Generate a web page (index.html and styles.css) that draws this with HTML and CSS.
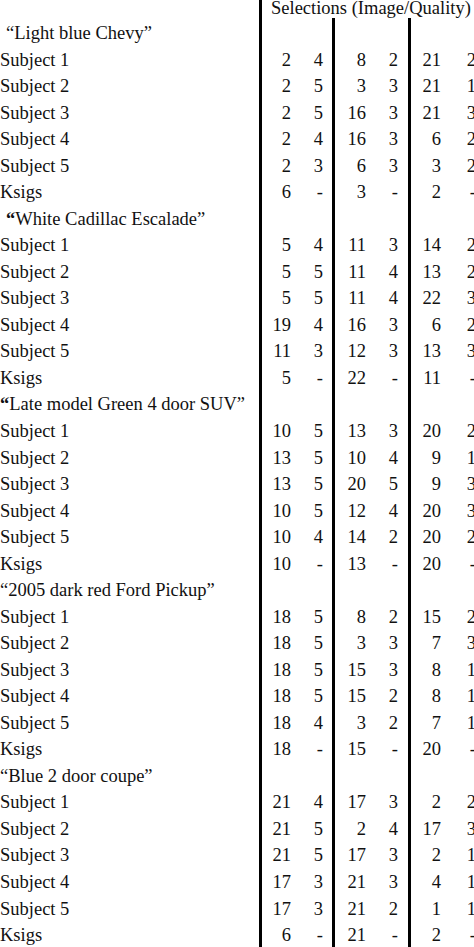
FILE: index.html
```html
<!DOCTYPE html>
<html lang="en">
<head>
<meta charset="utf-8">
<title>Selections table</title>
<link rel="stylesheet" href="styles.css">
</head>
<body>
<div class="table">
  <div class="head"><div class="lbl"></div><div class="span">Selections (Image/Quality)</div></div>

  <div class="row"><div class="lbl ind">“Light blue Chevy”</div><div class="grp g1"></div><div class="grp g2"></div><div class="grp g3"></div></div>
  <div class="row"><div class="lbl">Subject 1</div><div class="grp g1"><span>2</span><span>4</span></div><div class="grp g2"><span>8</span><span>2</span></div><div class="grp g3"><span>21</span><span>2</span></div></div>
  <div class="row"><div class="lbl">Subject 2</div><div class="grp g1"><span>2</span><span>5</span></div><div class="grp g2"><span>3</span><span>3</span></div><div class="grp g3"><span>21</span><span>1</span></div></div>
  <div class="row"><div class="lbl">Subject 3</div><div class="grp g1"><span>2</span><span>5</span></div><div class="grp g2"><span>16</span><span>3</span></div><div class="grp g3"><span>21</span><span>3</span></div></div>
  <div class="row"><div class="lbl">Subject 4</div><div class="grp g1"><span>2</span><span>4</span></div><div class="grp g2"><span>16</span><span>3</span></div><div class="grp g3"><span>6</span><span>2</span></div></div>
  <div class="row"><div class="lbl">Subject 5</div><div class="grp g1"><span>2</span><span>3</span></div><div class="grp g2"><span>6</span><span>3</span></div><div class="grp g3"><span>3</span><span>2</span></div></div>
  <div class="row"><div class="lbl">Ksigs</div><div class="grp g1"><span>6</span><span>-</span></div><div class="grp g2"><span>3</span><span>-</span></div><div class="grp g3"><span>2</span><span>-</span></div></div>

  <div class="row"><div class="lbl ind"><b>“</b>White Cadillac Escalade”</div><div class="grp g1"></div><div class="grp g2"></div><div class="grp g3"></div></div>
  <div class="row"><div class="lbl">Subject 1</div><div class="grp g1"><span>5</span><span>4</span></div><div class="grp g2"><span>11</span><span>3</span></div><div class="grp g3"><span>14</span><span>2</span></div></div>
  <div class="row"><div class="lbl">Subject 2</div><div class="grp g1"><span>5</span><span>5</span></div><div class="grp g2"><span>11</span><span>4</span></div><div class="grp g3"><span>13</span><span>2</span></div></div>
  <div class="row"><div class="lbl">Subject 3</div><div class="grp g1"><span>5</span><span>5</span></div><div class="grp g2"><span>11</span><span>4</span></div><div class="grp g3"><span>22</span><span>3</span></div></div>
  <div class="row"><div class="lbl">Subject 4</div><div class="grp g1"><span>19</span><span>4</span></div><div class="grp g2"><span>16</span><span>3</span></div><div class="grp g3"><span>6</span><span>2</span></div></div>
  <div class="row"><div class="lbl">Subject 5</div><div class="grp g1"><span>11</span><span>3</span></div><div class="grp g2"><span>12</span><span>3</span></div><div class="grp g3"><span>13</span><span>3</span></div></div>
  <div class="row"><div class="lbl">Ksigs</div><div class="grp g1"><span>5</span><span>-</span></div><div class="grp g2"><span>22</span><span>-</span></div><div class="grp g3"><span>11</span><span>-</span></div></div>

  <div class="row"><div class="lbl"><b>“</b>Late model Green 4 door SUV”</div><div class="grp g1"></div><div class="grp g2"></div><div class="grp g3"></div></div>
  <div class="row"><div class="lbl">Subject 1</div><div class="grp g1"><span>10</span><span>5</span></div><div class="grp g2"><span>13</span><span>3</span></div><div class="grp g3"><span>20</span><span>2</span></div></div>
  <div class="row"><div class="lbl">Subject 2</div><div class="grp g1"><span>13</span><span>5</span></div><div class="grp g2"><span>10</span><span>4</span></div><div class="grp g3"><span>9</span><span>1</span></div></div>
  <div class="row"><div class="lbl">Subject 3</div><div class="grp g1"><span>13</span><span>5</span></div><div class="grp g2"><span>20</span><span>5</span></div><div class="grp g3"><span>9</span><span>3</span></div></div>
  <div class="row"><div class="lbl">Subject 4</div><div class="grp g1"><span>10</span><span>5</span></div><div class="grp g2"><span>12</span><span>4</span></div><div class="grp g3"><span>20</span><span>3</span></div></div>
  <div class="row"><div class="lbl">Subject 5</div><div class="grp g1"><span>10</span><span>4</span></div><div class="grp g2"><span>14</span><span>2</span></div><div class="grp g3"><span>20</span><span>2</span></div></div>
  <div class="row"><div class="lbl">Ksigs</div><div class="grp g1"><span>10</span><span>-</span></div><div class="grp g2"><span>13</span><span>-</span></div><div class="grp g3"><span>20</span><span>-</span></div></div>

  <div class="row"><div class="lbl">“2005 dark red Ford Pickup”</div><div class="grp g1"></div><div class="grp g2"></div><div class="grp g3"></div></div>
  <div class="row"><div class="lbl">Subject 1</div><div class="grp g1"><span>18</span><span>5</span></div><div class="grp g2"><span>8</span><span>2</span></div><div class="grp g3"><span>15</span><span>2</span></div></div>
  <div class="row"><div class="lbl">Subject 2</div><div class="grp g1"><span>18</span><span>5</span></div><div class="grp g2"><span>3</span><span>3</span></div><div class="grp g3"><span>7</span><span>3</span></div></div>
  <div class="row"><div class="lbl">Subject 3</div><div class="grp g1"><span>18</span><span>5</span></div><div class="grp g2"><span>15</span><span>3</span></div><div class="grp g3"><span>8</span><span>1</span></div></div>
  <div class="row"><div class="lbl">Subject 4</div><div class="grp g1"><span>18</span><span>5</span></div><div class="grp g2"><span>15</span><span>2</span></div><div class="grp g3"><span>8</span><span>1</span></div></div>
  <div class="row"><div class="lbl">Subject 5</div><div class="grp g1"><span>18</span><span>4</span></div><div class="grp g2"><span>3</span><span>2</span></div><div class="grp g3"><span>7</span><span>1</span></div></div>
  <div class="row"><div class="lbl">Ksigs</div><div class="grp g1"><span>18</span><span>-</span></div><div class="grp g2"><span>15</span><span>-</span></div><div class="grp g3"><span>20</span><span>-</span></div></div>

  <div class="row"><div class="lbl">“Blue 2 door coupe”</div><div class="grp g1"></div><div class="grp g2"></div><div class="grp g3"></div></div>
  <div class="row"><div class="lbl">Subject 1</div><div class="grp g1"><span>21</span><span>4</span></div><div class="grp g2"><span>17</span><span>3</span></div><div class="grp g3"><span>2</span><span>2</span></div></div>
  <div class="row"><div class="lbl">Subject 2</div><div class="grp g1"><span>21</span><span>5</span></div><div class="grp g2"><span>2</span><span>4</span></div><div class="grp g3"><span>17</span><span>3</span></div></div>
  <div class="row"><div class="lbl">Subject 3</div><div class="grp g1"><span>21</span><span>5</span></div><div class="grp g2"><span>17</span><span>3</span></div><div class="grp g3"><span>2</span><span>1</span></div></div>
  <div class="row"><div class="lbl">Subject 4</div><div class="grp g1"><span>17</span><span>3</span></div><div class="grp g2"><span>21</span><span>3</span></div><div class="grp g3"><span>4</span><span>1</span></div></div>
  <div class="row"><div class="lbl">Subject 5</div><div class="grp g1"><span>17</span><span>3</span></div><div class="grp g2"><span>21</span><span>2</span></div><div class="grp g3"><span>1</span><span>1</span></div></div>
  <div class="row"><div class="lbl">Ksigs</div><div class="grp g1"><span>6</span><span>-</span></div><div class="grp g2"><span>21</span><span>-</span></div><div class="grp g3"><span>2</span><span>-</span></div></div>
</div>
</body>
</html>
```
FILE: styles.css
```css
html, body {
  margin: 0;
  padding: 0;
  background: #fff;
  overflow: hidden;
}

body {
  font-family: "Liberation Serif", "Times New Roman", serif;
  font-size: 18.5px;
  color: #111;
  width: 474px;
  height: 947px;
}

.table {
  display: flex;
  flex-direction: column;
  width: 520px;
}

.head {
  display: flex;
  height: 18px;
  line-height: 17px;
}

.head .lbl {
  width: 259px;
  flex: none;
  border-right: 3px solid #000;
}

.head .span {
  padding-left: 9px;
  white-space: nowrap;
}

.row {
  display: flex;
  box-sizing: border-box;
  height: 26.54px;
  line-height: 22.5px;
  padding-top: 4px;
}

.row .grp {
  margin-top: -4px;
  padding-top: 4px;
}

.lbl {
  width: 259px;
  flex: none;
  white-space: nowrap;
}

.lbl.ind {
  padding-left: 6px;
  box-sizing: border-box;
}

.lbl b {
  font-weight: bold;
}

.grp {
  display: flex;
  flex: none;
  border-left: 3px solid #000;
}

.grp span {
  text-align: right;
  flex: none;
}

.g1 { width: 70px; }
.g1 span:first-child { width: 29px; }
.g1 span:last-child { width: 32px; }

.g2 { width: 73px; }
.g2 span:first-child { width: 31px; }
.g2 span:last-child { width: 32px; }

.g3 { width: 100px; }
.g3 span:first-child { width: 30px; }
.g3 span:last-child { width: 35px; }
```
